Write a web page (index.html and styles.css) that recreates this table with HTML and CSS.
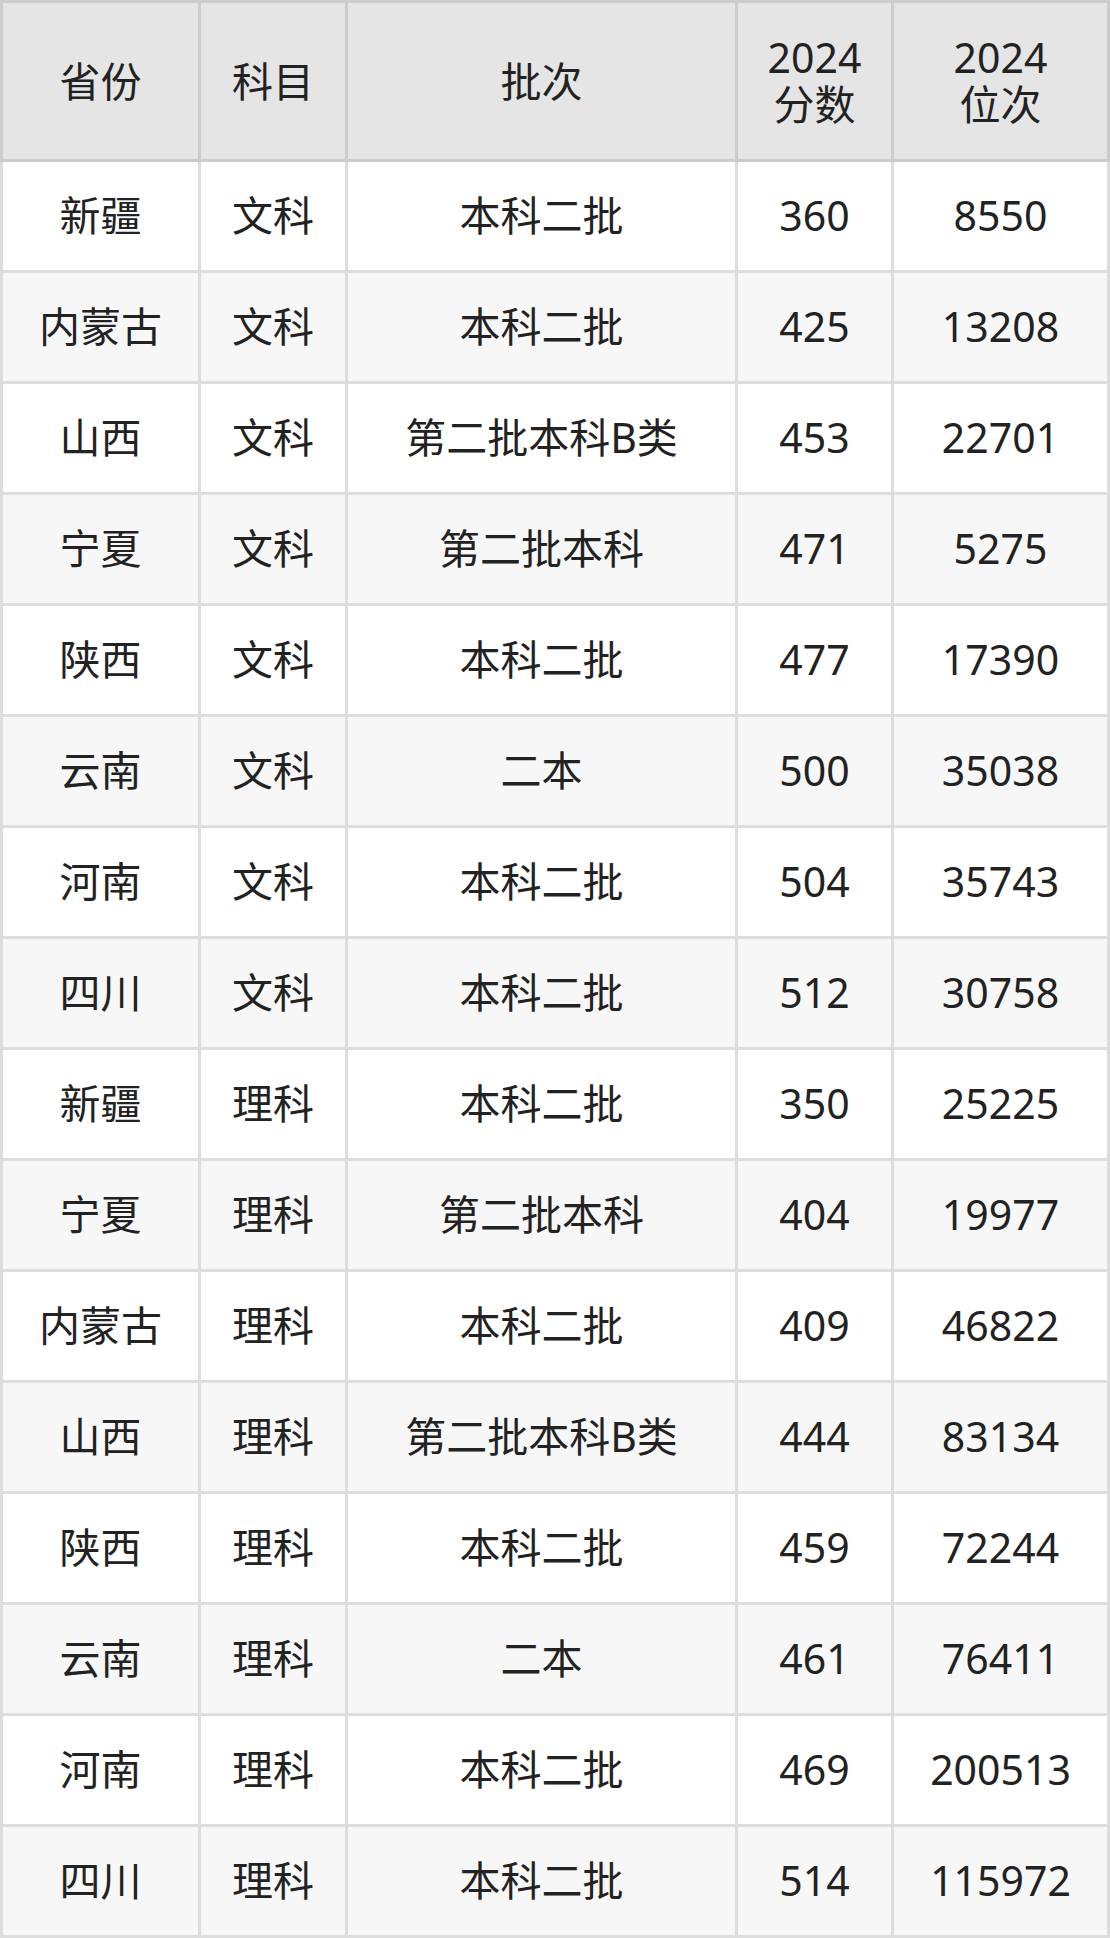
FILE: index.html
```html
<!DOCTYPE html>
<html lang="zh-CN">
<head>
<meta charset="utf-8">
<title>录取分数</title>
<link rel="stylesheet" href="styles.css">
</head>
<body>
<div class="table">
  <div class="thead">
    <div class="th">省份</div>
    <div class="th">科目</div>
    <div class="th">批次</div>
    <div class="th">2024<br>分数</div>
    <div class="th">2024<br>位次</div>
  </div>
  <div class="tbody">
    <div class="td">新疆</div><div class="td">文科</div><div class="td">本科二批</div><div class="td">360</div><div class="td">8550</div>
    <div class="td alt">内蒙古</div><div class="td alt">文科</div><div class="td alt">本科二批</div><div class="td alt">425</div><div class="td alt">13208</div>
    <div class="td">山西</div><div class="td">文科</div><div class="td">第二批本科B类</div><div class="td">453</div><div class="td">22701</div>
    <div class="td alt">宁夏</div><div class="td alt">文科</div><div class="td alt">第二批本科</div><div class="td alt">471</div><div class="td alt">5275</div>
    <div class="td">陕西</div><div class="td">文科</div><div class="td">本科二批</div><div class="td">477</div><div class="td">17390</div>
    <div class="td alt">云南</div><div class="td alt">文科</div><div class="td alt">二本</div><div class="td alt">500</div><div class="td alt">35038</div>
    <div class="td">河南</div><div class="td">文科</div><div class="td">本科二批</div><div class="td">504</div><div class="td">35743</div>
    <div class="td alt">四川</div><div class="td alt">文科</div><div class="td alt">本科二批</div><div class="td alt">512</div><div class="td alt">30758</div>
    <div class="td">新疆</div><div class="td">理科</div><div class="td">本科二批</div><div class="td">350</div><div class="td">25225</div>
    <div class="td alt">宁夏</div><div class="td alt">理科</div><div class="td alt">第二批本科</div><div class="td alt">404</div><div class="td alt">19977</div>
    <div class="td">内蒙古</div><div class="td">理科</div><div class="td">本科二批</div><div class="td">409</div><div class="td">46822</div>
    <div class="td alt">山西</div><div class="td alt">理科</div><div class="td alt">第二批本科B类</div><div class="td alt">444</div><div class="td alt">83134</div>
    <div class="td">陕西</div><div class="td">理科</div><div class="td">本科二批</div><div class="td">459</div><div class="td">72244</div>
    <div class="td alt">云南</div><div class="td alt">理科</div><div class="td alt">二本</div><div class="td alt">461</div><div class="td alt">76411</div>
    <div class="td">河南</div><div class="td">理科</div><div class="td">本科二批</div><div class="td">469</div><div class="td">200513</div>
    <div class="td alt">四川</div><div class="td alt">理科</div><div class="td alt">本科二批</div><div class="td alt">514</div><div class="td alt">115972</div>
  </div>
</div>
</body>
</html>
```
FILE: styles.css
```css
html, body {
  margin: 0;
  padding: 0;
  background: #ffffff;
}

body {
  font-family: "Noto Sans", "Noto Sans CJK SC", sans-serif;
  font-size: 41px;
  color: #222222;
}

.table {
  width: 1110px;
}

.thead,
.tbody {
  display: grid;
  grid-template-columns: 195px 144px 387px 153px 213px;
  column-gap: 3px;
  row-gap: 3px;
  padding: 3px;
}

.thead {
  background: #cccccc;
  grid-template-rows: 156px;
}

.tbody {
  background: #dddddd;
  padding-top: 0;
  grid-auto-rows: 108px;
}

.th,
.td {
  display: flex;
  align-items: center;
  justify-content: center;
  text-align: center;
  white-space: nowrap;
}

.th {
  background: #e5e5e5;
  line-height: 47px;
}

.td {
  background: #ffffff;
  line-height: 1.2;
}

.td.alt {
  background: #f7f7f7;
}
```
